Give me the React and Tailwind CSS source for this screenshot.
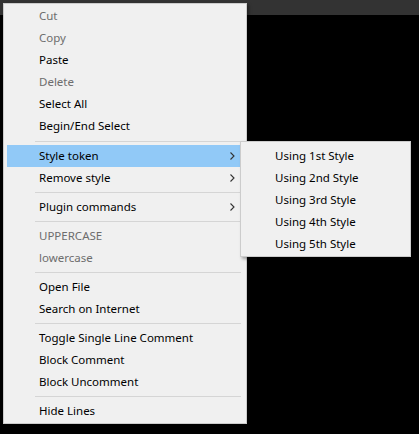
import React from 'react';

const mainItems = [
  { label: 'Cut', disabled: true },
  { label: 'Copy', disabled: true },
  { label: 'Paste' },
  { label: 'Delete', disabled: true },
  { label: 'Select All' },
  { label: 'Begin/End Select' },
  { sep: true, tall: true },
  { label: 'Style token', sub: true, active: true },
  { label: 'Remove style', sub: true },
  { sep: true },
  { label: 'Plugin commands', sub: true },
  { sep: true },
  { label: 'UPPERCASE', disabled: true },
  { label: 'lowercase', disabled: true },
  { sep: true },
  { label: 'Open File' },
  { label: 'Search on Internet' },
  { sep: true },
  { label: 'Toggle Single Line Comment' },
  { label: 'Block Comment' },
  { label: 'Block Uncomment' },
  { sep: true },
  { label: 'Hide Lines' },
];

const styleItems = ['Using 1st Style', 'Using 2nd Style', 'Using 3rd Style', 'Using 4th Style', 'Using 5th Style'];

const Chevron = () => (
  <svg width="5" height="8" viewBox="0 0 5 8" className="mr-[6px]">
    <path d="M0.5 0.5 L4 4 L0.5 7.5" fill="none" stroke="#333" strokeWidth="1.1" />
  </svg>
);

const MenuRow = ({ item }) => {
  if (item.sep) {
    return (
      <div className={`${item.tall ? 'h-[8px]' : 'h-[7px]'} flex items-center pl-[28px]`}>
        <div className="h-px w-full bg-[#d5d5d5]" />
      </div>
    );
  }
  return (
    <div
      className={`h-[22px] flex items-center justify-between pl-[32px] ${
        item.active ? 'bg-[#91c9f7]' : ''
      } ${item.disabled ? 'text-[#6d6d6d]' : 'text-black'}`}
    >
      <span>{item.label}</span>
      {item.sub && <Chevron />}
    </div>
  );
};

export default function App() {
  return (
    <div
      className="relative w-[419px] h-[434px] bg-black overflow-hidden text-[11.5px]"
      style={{ fontFamily: '"Noto Sans", "Open Sans", sans-serif' }}
    >
      <div className="h-[15px] bg-[#333333]" />

      {/* context menu */}
      <div className="absolute left-[3px] top-[3px] w-[244px] bg-[#f0f0f0] border border-[#cccccc] pt-[1px] pb-[1px] pl-[3px] pr-[5px] shadow-[2px_2px_3px_rgba(0,0,0,0.35)]">
        {mainItems.map((item, i) => (
          <MenuRow key={i} item={item} />
        ))}
      </div>

      {/* style token submenu */}
      <div className="absolute left-[240px] top-[141px] w-[171px] bg-[#f0f0f0] border border-[#cccccc] pt-[3px] pb-[1px] pl-[3px] pr-[3px] shadow-[2px_2px_3px_rgba(0,0,0,0.35)]">
        {styleItems.map((label) => (
          <div key={label} className="h-[22px] flex items-center pl-[31px] text-black">
            {label}
          </div>
        ))}
      </div>
    </div>
  );
}
